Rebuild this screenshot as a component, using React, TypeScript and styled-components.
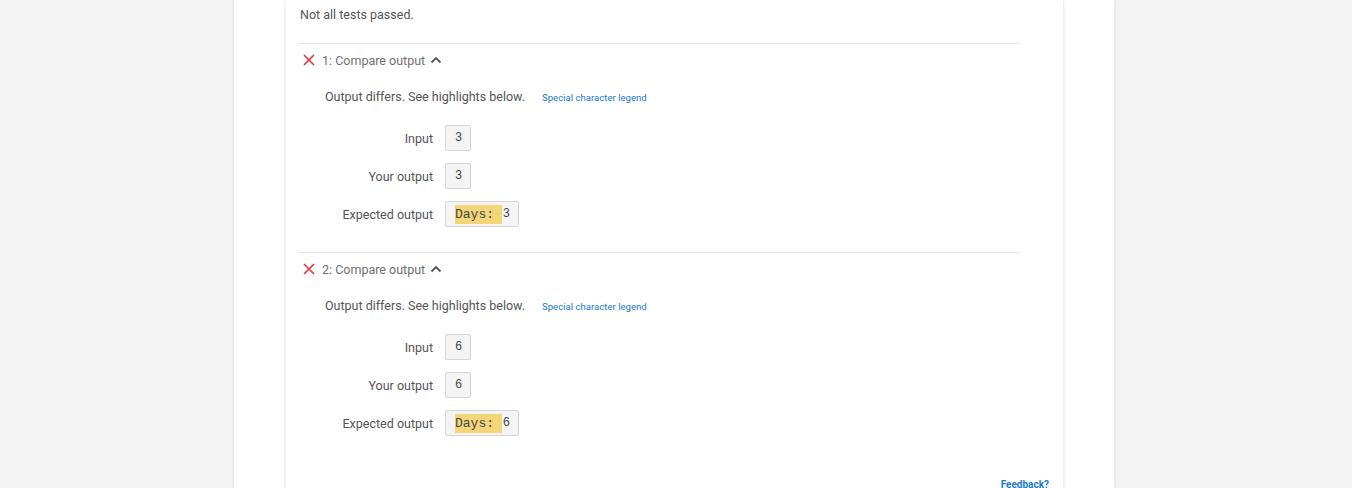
import React from 'react';
import styled, { createGlobalStyle } from 'styled-components';

const GlobalStyle = createGlobalStyle`
  html, body {
    margin: 0;
    padding: 0;
    background: #f3f3f3;
    font-family: Roboto, 'Liberation Sans', sans-serif;
    overflow: hidden;
  }
`;

const Page = styled.div`
  display: flex;
  height: 488px;
  padding-left: 234px;
`;

const Main = styled.div`
  width: 880px;
  background: #fff;
  box-shadow: 0 0 3px rgba(0, 0, 0, 0.12);
  padding-left: 52px;
  box-sizing: border-box;
`;

const Card = styled.div`
  width: 777px;
  min-height: 600px;
  background: #fff;
  box-shadow: 0 1px 4px rgba(0, 0, 0, 0.16);
  padding: 6px 14px 0 13px;
  box-sizing: border-box;
`;

const Summary = styled.div`
  font-size: 12.5px;
  line-height: 18px;
  color: #555;
  padding-left: 1px;
  height: 37px;
`;

const Section = styled.div`
  width: 721px;
  border-top: 1px solid #e6e6e6;
  padding-bottom: 25px;
`;

const Header = styled.div`
  display: flex;
  align-items: center;
  height: 32px;
  padding-left: 4px;
  gap: 7px;
  font-size: 12.5px;
  color: #707070;
`;

const Message = styled.div`
  display: flex;
  align-items: baseline;
  margin: 11px 0 0 26px;
  height: 20px;
  line-height: 20px;
  font-size: 12.5px;
  color: #555;
`;

const Legend = styled.a`
  margin-left: 17px;
  font-size: 9.6px;
  color: #1a7bd0;
  cursor: pointer;
`;

const Rows = styled.div`
  display: grid;
  grid-template-columns: 134px auto;
  column-gap: 12px;
  row-gap: 12px;
  margin-top: 18px;
  justify-content: start;
  align-items: center;
`;

const Label = styled.div`
  text-align: right;
  font-size: 12.5px;
  color: #555;
`;

const Value = styled.div`
  justify-self: start;
  display: flex;
  align-items: center;
  height: 26px;
  box-sizing: border-box;
  padding: 0 8px 0 9px;
  background: #f4f4f4;
  border: 1px solid #d6d6d6;
  border-radius: 2px;
  font-family: 'Courier New', 'Liberation Mono', monospace;
  font-size: 12px;
  color: #444;
  white-space: pre;
`;

const Mark = styled.span`
  background: #f3d57a;
  padding: 2px 0;
  margin-right: 1px;
  font-size: 13px;
`;

const Footer = styled.div`
  width: 750px;
  display: flex;
  justify-content: flex-end;
  padding-top: 18px;
`;

const Feedback = styled.a`
  font-size: 10px;
  font-weight: bold;
  color: #1a7bd0;
  cursor: pointer;
`;

function FailIcon() {
  return (
    <svg width="12" height="12" viewBox="0 0 12 12">
      <path d="M1 1 L11 11 M11 1 L1 11" stroke="#e8323c" strokeWidth="1.6" fill="none" />
    </svg>
  );
}

function ChevronUp() {
  return (
    <svg width="12" height="8" viewBox="0 0 12 8" style={{ marginLeft: -2 }}>
      <polyline points="1.5,6.5 6,2 10.5,6.5" stroke="#555" strokeWidth="1.8" fill="none" />
    </svg>
  );
}

type Test = { n: number; input: string; output: string; expected: string };

const tests: Test[] = [
  { n: 1, input: '3', output: '3', expected: '3' },
  { n: 2, input: '6', output: '6', expected: '6' },
];

function TestResult({ t }: { t: Test }) {
  return (
    <Section>
      <Header>
        <FailIcon />
        <span>{t.n}: Compare output</span>
        <ChevronUp />
      </Header>
      <Message>
        Output differs. See highlights below.
        <Legend>Special character legend</Legend>
      </Message>
      <Rows>
        <Label>Input</Label>
        <Value>{t.input}</Value>
        <Label>Your output</Label>
        <Value>{t.output}</Value>
        <Label>Expected output</Label>
        <Value>
          <Mark>Days: </Mark>
          {t.expected}
        </Value>
      </Rows>
    </Section>
  );
}

export default function App() {
  return (
    <>
      <GlobalStyle />
      <Page>
        <Main>
          <Card>
            <Summary>Not all tests passed.</Summary>
            {tests.map((t) => (
              <TestResult key={t.n} t={t} />
            ))}
            <Footer>
              <Feedback>Feedback?</Feedback>
            </Footer>
          </Card>
        </Main>
      </Page>
    </>
  );
}
